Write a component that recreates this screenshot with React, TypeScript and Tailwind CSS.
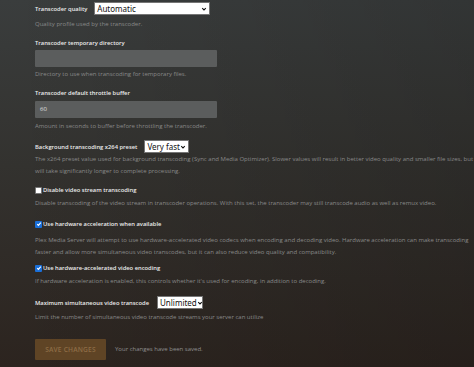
import React from 'react';

const Chevron = () => (
  <svg viewBox="0 0 10 10" className="w-[6px] h-[6px] shrink-0" fill="none" stroke="#111" strokeWidth={1.8}>
    <path d="M2 3.5l3 3 3-3" />
  </svg>
);

const FakeSelect = ({ value, width }: { value: string; width: string }) => (
  <div
    className={`${width} h-[13px] bg-white border border-[#767676] flex items-center justify-between pl-[2px] pr-[2px] text-[#111] text-[8px] font-['Noto_Sans',sans-serif] leading-none whitespace-nowrap shrink-0`}
  >
    <span>{value}</span>
    <Chevron />
  </div>
);

const Checkbox = ({ checked }: { checked: boolean }) =>
  checked ? (
    <span className="w-[7px] h-[7px] rounded-[1px] bg-[#1a6fd9] flex items-center justify-center shrink-0">
      <svg viewBox="0 0 10 10" className="w-[6px] h-[6px]" fill="none" stroke="#fff" strokeWidth={2}>
        <path d="M2 5.2l2 2 4-4.4" />
      </svg>
    </span>
  ) : (
    <span className="w-[7px] h-[7px] rounded-[1px] bg-white border border-[#767676] shrink-0" />
  );

const Desc = ({ children, className = '' }: { children: React.ReactNode; className?: string }) => (
  <p className={`text-[6px] leading-[12px] text-[#898989] ${className}`}>{children}</p>
);

const Label = ({ children, className = '' }: { children: React.ReactNode; className?: string }) => (
  <div className={`text-[5.8px] font-semibold text-[#ececec] leading-[10px] whitespace-nowrap shrink-0 ${className}`}>
    {children}
  </div>
);

export default function App() {
  return (
    <div className="w-[474px] h-[367px] overflow-hidden font-['Open_Sans',sans-serif] bg-[linear-gradient(to_right,rgba(0,0,0,0)_0%,rgba(0,0,0,0.14)_100%),linear-gradient(to_bottom,#3a3d3d_0%,#33322f_45%,#2c241f_100%)]">
      <div className="pl-[35px] w-[482px] pt-[2px] flex flex-col">
        {/* Transcoder quality */}
        <div className="flex items-center gap-[7px]">
          <Label>Transcoder quality</Label>
          <FakeSelect value="Automatic" width="w-[116px]" />
        </div>
        <Desc className="mt-[3px] leading-[10px]">Quality profile used by the transcoder.</Desc>

        {/* temp dir */}
        <Label className="mt-[8px]">Transcoder temporary directory</Label>
        <div className="mt-[2px] w-[182px] h-[17px] bg-[#5b5d5d] rounded-[1px]" />
        <Desc className="mt-[1px] leading-[10px]">Directory to use when transcoding for temporary files.</Desc>

        {/* throttle buffer */}
        <Label className="mt-[8px]">Transcoder default throttle buffer</Label>
        <div className="mt-[3px] w-[182px] h-[17px] bg-[#5b5d5d] rounded-[1px] flex items-center pl-[5px] text-[6px] text-[#e0e0e0]">
          60
        </div>
        <Desc className="mt-[2px] leading-[10px]">Amount in seconds to buffer before throttling the transcoder.</Desc>

        {/* x264 preset */}
        <div className="mt-[8px] flex items-center gap-[7px]">
          <Label>Background transcoding x264 preset</Label>
          <FakeSelect value="Very fast" width="w-[45px]" />
        </div>
        <Desc>
          The x264 preset value used for background transcoding (Sync and Media Optimizer). Slower values will
          result in better video quality and smaller file sizes, but will take significantly longer to complete
          processing.
        </Desc>

        {/* disable video */}
        <div className="mt-[8px] flex items-center gap-[1px]">
          <Checkbox checked={false} />
          <Label>Disable video stream transcoding</Label>
        </div>
        <Desc className="mt-[2px] leading-[10px]">
          Disable transcoding of the video stream in transcoder operations. With this set, the transcoder may still
          transcode audio as well as remux video.
        </Desc>

        {/* hw accel */}
        <div className="mt-[10px] flex items-center gap-[1px]">
          <Checkbox checked />
          <Label>Use hardware acceleration when available</Label>
        </div>
        <Desc className="mt-[5px]">
          Plex Media Server will attempt to use hardware-accelerated video codecs when encoding and decoding video.
          Hardware acceleration can make transcoding faster and allow more simultaneous video transcodes, but it can
          also reduce video quality and compatibility.
        </Desc>

        {/* hw encoding */}
        <div className="mt-[5px] flex items-center gap-[1px]">
          <Checkbox checked />
          <Label>Use hardware-accelerated video encoding</Label>
        </div>
        <Desc className="mt-[2px] leading-[10px]">
          If hardware acceleration is enabled, this controls whether it's used for encoding, in addition to decoding.
        </Desc>

        {/* max simultaneous */}
        <div className="mt-[9px] flex items-center gap-[8px]">
          <Label>Maximum simultaneous video transcode</Label>
          <FakeSelect value="Unlimited" width="w-[46px]" />
        </div>
        <Desc className="mt-[2px] leading-[10px]">
          Limit the number of simultaneous video transcode streams your server can utilize
        </Desc>

        {/* save */}
        <div className="mt-[16px] flex items-center gap-[9px]">
          <button className="w-[71px] h-[21px] bg-[#5f4425] rounded-[1px] text-[6.6px] font-semibold text-[#8e6d46] tracking-[0.2px]">
            SAVE CHANGES
          </button>
          <span className="text-[6px] text-[#8f8f8f]">Your changes have been saved.</span>
        </div>
      </div>
    </div>
  );
}
